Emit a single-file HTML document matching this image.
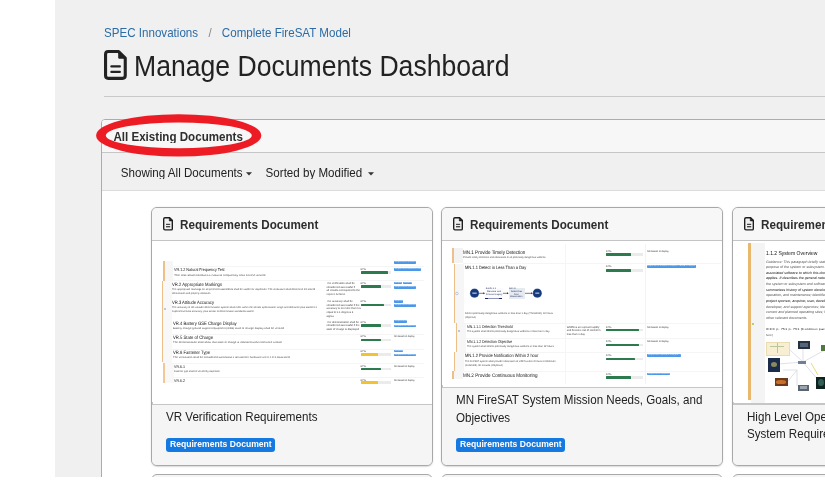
<!DOCTYPE html>
<html><head><meta charset="utf-8">
<style>
*{box-sizing:border-box;margin:0;padding:0}
html,body{width:825px;height:483px;overflow:hidden;background:#fff;font-family:"Liberation Sans",sans-serif;position:relative}
.abs{position:absolute}
.main{position:absolute;left:55px;top:0;width:770px;height:477px;background:#f0f0f0}
.bc{position:absolute;left:104px;top:24.7px;transform:scaleY(1.06);transform-origin:0 2.4px;font-size:11.6px;color:#2c6ca6;white-space:nowrap;line-height:14px}
.bc .sep{color:#888;margin:0 10px 0 10.5px}
.title{position:absolute;left:134px;top:49px;font-size:26.6px;color:#222;white-space:nowrap;line-height:32px;transform:scaleY(1.09);transform-origin:0 7px}
.hr{position:absolute;left:104px;top:96px;width:721px;height:1px;background:#c9c9c9}
.panel{position:absolute;left:101px;top:119px;width:740px;height:380px;border:1.8px solid #acacac;border-radius:4px;background:#fff;overflow:hidden}
.phead{position:absolute;left:0;top:0;right:0;height:32.5px;background:#f7f7f7;border-bottom:1px solid #c6c6c6}
.phead span{position:absolute;left:11.4px;top:9px;transform:scaleY(1.06);transform-origin:0 2.4px;font-size:11.6px;font-weight:bold;color:#2e2e2e;line-height:14px;white-space:nowrap}
.tool{position:absolute;left:0;top:32.5px;right:0;height:38.5px;background:#f0f0f0;border-bottom:1px solid #dcdcdc}
.tool span{position:absolute;top:12.4px;transform:scaleY(1.06);transform-origin:0 2.4px;font-size:11.6px;color:#222;line-height:14px;white-space:nowrap}
.caret{display:inline-block;width:0;height:0;border-left:3px solid transparent;border-right:3px solid transparent;border-top:3px solid #333;vertical-align:middle;margin-left:3px;margin-top:-2px;position:relative;top:2px}
.card{position:absolute;top:207px;width:281.5px;height:258.5px;border:1.8px solid #a8a8a8;border-radius:6px;background:#f5f5f5;overflow:hidden;box-shadow:0 0.5px 1.5px rgba(0,0,0,.15)}
.chead{position:absolute;left:0;top:0;right:0;height:33px;background:#f7f7f7;border-bottom:1.2px solid #c4c4c4}
.chead span{position:absolute;left:28px;top:9.3px;transform:scaleY(1.06);transform-origin:0 2.4px;font-size:11.7px;font-weight:bold;color:#2e2e2e;line-height:14px;white-space:nowrap}
.chead svg{position:absolute;left:11px;top:9px}
.thumb{position:absolute;left:0;top:33px;right:0;background:#fff;border-bottom:3px solid #c6c6c6}
.cfoot{position:absolute;left:0;right:0;bottom:0;background:#f5f5f5}
.ctitle{position:absolute;left:14px;transform:scaleY(1.06);transform-origin:0 4.2px;font-size:11.6px;color:#222;line-height:16.6px}
.badge{position:absolute;left:14px;height:13.9px;background:#1479e0;color:#fff;font-size:8.6px;font-weight:bold;line-height:13.9px;padding:0 3.2px 0 4px;border-radius:3px;white-space:nowrap}
.badge span{display:inline-block;transform:scaleY(1.1);transform-origin:0 60%}
.card2{position:absolute;top:474px;width:281.5px;height:40px;border:1.8px solid #a8a8a8;border-radius:6px;background:#f5f5f5}
.ell{position:absolute;left:0;top:0}
.clip{position:absolute;overflow:hidden}
.blur{filter:blur(0.4px)}
.inner{position:absolute;width:1px;height:1px}
.tt{position:absolute;white-space:nowrap;line-height:1;font-family:"Liberation Sans",sans-serif;text-rendering:geometricPrecision}
.rr{position:absolute}
</style></head><body>
<div class="main"></div>
<div class="bc">SPEC Innovations<span class="sep">/</span>Complete FireSAT Model</div>
<svg class="abs" style="left:104px;top:50px" width="24" height="31" viewBox="0 0 24 31">
<path d="M4.3 1.55 H14.6 L21.25 8.2 V25.6 Q21.25 28.35 18.5 28.35 H4.3 Q1.55 28.35 1.55 25.6 V4.3 Q1.55 1.55 4.3 1.55 Z" fill="none" stroke="#222" stroke-width="3.1" stroke-linejoin="round"/>
<path d="M14.2 1.6 V7.6 Q14.2 8.8 15.4 8.8 H21.3 Z" fill="#222"/>
<line x1="7.4" y1="16.45" x2="15.8" y2="16.45" stroke="#222" stroke-width="2.3" stroke-linecap="round"/>
<line x1="7.4" y1="21.95" x2="15.8" y2="21.95" stroke="#222" stroke-width="2.3" stroke-linecap="round"/>
</svg>
<div class="title">Manage Documents Dashboard</div>
<div class="hr"></div>
<div class="panel">
 <div class="phead"><span>All Existing Documents</span></div>
 <div class="tool"><span style="left:18.8px">Showing All Documents<i class="caret"></i></span><span style="left:163.6px">Sorted by Modified<i class="caret" style="margin-left:6px"></i></span></div>
</div>

<div class="card" style="left:151px">
 <div class="chead"><svg width="11" height="14" viewBox="0 0 11 14"><path d="M2 .7H6.6L9.3 3.4V11.9Q9.3 12.8 8.4 12.8H2Q.7 12.8 .7 11.5V2Q.7.7 2 .7Z" fill="#f0f0f0" stroke="#1e1e1e" stroke-width="1.35"/><path d="M6.3 .8V3.9H9.3Z" fill="#1e1e1e" stroke="#1e1e1e" stroke-width=".6"/><rect x="3" y="6.8" width="4.2" height="1.1" fill="#333"/><rect x="3" y="9.2" width="4.2" height="1.1" fill="#1e1e1e"/></svg><span>Requirements Document</span></div>
 <div class="thumb" style="height:164px"></div>
 <div class="cfoot" style="top:197px"><div class="ctitle" style="top:3.5px">VR Verification Requirements</div><div class="badge" style="top:33px"><span>Requirements Document</span></div></div>
</div>
<div class="card" style="left:441px">
 <div class="chead"><svg width="11" height="14" viewBox="0 0 11 14"><path d="M2 .7H6.6L9.3 3.4V11.9Q9.3 12.8 8.4 12.8H2Q.7 12.8 .7 11.5V2Q.7.7 2 .7Z" fill="#f0f0f0" stroke="#1e1e1e" stroke-width="1.35"/><path d="M6.3 .8V3.9H9.3Z" fill="#1e1e1e" stroke="#1e1e1e" stroke-width=".6"/><rect x="3" y="6.8" width="4.2" height="1.1" fill="#333"/><rect x="3" y="9.2" width="4.2" height="1.1" fill="#1e1e1e"/></svg><span>Requirements Document</span></div>
 <div class="thumb" style="height:147px"></div>
 <div class="cfoot" style="top:180px"><div class="ctitle" style="top:3.5px">MN FireSAT System Mission Needs, Goals, and<br>Objectives</div><div class="badge" style="top:50px"><span>Requirements Document</span></div></div>
</div>
<div class="card" style="left:732px">
 <div class="chead"><svg width="11" height="14" viewBox="0 0 11 14"><path d="M2 .7H6.6L9.3 3.4V11.9Q9.3 12.8 8.4 12.8H2Q.7 12.8 .7 11.5V2Q.7.7 2 .7Z" fill="#f0f0f0" stroke="#1e1e1e" stroke-width="1.35"/><path d="M6.3 .8V3.9H9.3Z" fill="#1e1e1e" stroke="#1e1e1e" stroke-width=".6"/><rect x="3" y="6.8" width="4.2" height="1.1" fill="#333"/><rect x="3" y="9.2" width="4.2" height="1.1" fill="#1e1e1e"/></svg><span>Requirements Document</span></div>
 <div class="thumb" style="height:164px"></div>
 <div class="cfoot" style="top:197px"><div class="ctitle" style="top:3.5px;line-height:16px">High Level Operational Concept and<br>System Requirements</div></div>
</div>
<!--THUMBS-->
<div class="clip blur" style="left:152.5px;top:241px;width:279px;height:163px;background:#fff"><div class="inner" style="left:-152.5px;top:-241px">
<div class="rr" style="left:163px;top:261px;width:10px;height:20px;background:#f6f6f6;"></div>
<div class="rr" style="left:163px;top:281px;width:9px;height:82px;background:#f8f8f8;"></div>
<div class="rr" style="left:165px;top:363px;width:9px;height:20px;background:#f8f8f8;"></div>
<div class="rr" style="left:163.2px;top:261px;width:1.5px;height:20px;background:#eec089;"></div>
<div class="rr" style="left:161.6px;top:281px;width:1.5px;height:81px;background:#eec089;"></div>
<div class="rr" style="left:163.4px;top:363px;width:1.6px;height:20px;background:#f2c898;"></div>
<div class="rr" style="left:172px;top:266px;width:252px;height:0.6px;background:#f5f5f5;"></div>
<div class="rr" style="left:172px;top:279.5px;width:252px;height:0.6px;background:#f5f5f5;"></div>
<div class="rr" style="left:172px;top:334px;width:252px;height:0.6px;background:#f5f5f5;"></div>
<div class="rr" style="left:172px;top:348.5px;width:252px;height:0.6px;background:#f5f5f5;"></div>
<div class="rr" style="left:172px;top:362.5px;width:252px;height:0.6px;background:#f5f5f5;"></div>
<div class="rr" style="left:172px;top:376.5px;width:252px;height:0.6px;background:#f5f5f5;"></div>
<div class="tt" style="left:173.8px;top:268.35px;font-size:4.31px;color:#111;font-weight:normal;font-style:normal;transform:scaleX(0.863);transform-origin:0 0;">VR.1.2 Natural Frequency Test</div>
<div class="tt" style="left:173.8px;top:274.50px;font-size:2.6px;color:#444;font-weight:normal;font-style:normal;transform:scaleX(1.334);transform-origin:0 0;">The test shall conduct a natural frequency test on the article</div>
<div class="tt" style="left:172.4px;top:284.18px;font-size:4.83px;color:#111;font-weight:normal;font-style:normal;transform:scaleX(0.866);transform-origin:0 0;">VR.2 Appropriate Markings</div>
<div class="tt" style="left:172.4px;top:289.20px;font-size:2.6px;color:#444;font-weight:normal;font-style:normal;transform:scaleX(0.995);transform-origin:0 0;">The appropriate markings on all preferred assemblies shall be visible for inspection. The innovative shall determine the stored</div>
<div class="tt" style="left:172.4px;top:292.80px;font-size:2.6px;color:#444;font-weight:normal;font-style:normal;transform:scaleX(0.926);transform-origin:0 0;">identification and property indication</div>
<div class="tt" style="left:172.4px;top:302.18px;font-size:4.83px;color:#111;font-weight:normal;font-style:normal;transform:scaleX(0.855);transform-origin:0 0;">VR.3 Attitude Accuracy</div>
<div class="tt" style="left:172.4px;top:307.20px;font-size:2.6px;color:#444;font-weight:normal;font-style:normal;transform:scaleX(0.990);transform-origin:0 0;">The accuracy of the attitude determination system shall meet within the sensor specification range and tolerance plus stated 0.1</div>
<div class="tt" style="left:172.4px;top:310.50px;font-size:2.6px;color:#444;font-weight:normal;font-style:normal;transform:scaleX(0.980);transform-origin:0 0;">expected vertical accuracy; plus similar to deterministic standards stated</div>
<div class="tt" style="left:172.6px;top:322.88px;font-size:4.83px;color:#111;font-weight:normal;font-style:normal;transform:scaleX(0.868);transform-origin:0 0;">VR.4 Battery GSE Charge Display</div>
<div class="tt" style="left:172.6px;top:327.80px;font-size:2.6px;color:#444;font-weight:normal;font-style:normal;transform:scaleX(1.098);transform-origin:0 0;">Battery charge ground support equipment (GSE) state of charge display shall be verified</div>
<div class="tt" style="left:172.6px;top:337.38px;font-size:4.83px;color:#111;font-weight:normal;font-style:normal;transform:scaleX(0.871);transform-origin:0 0;">VR.5 State of Charge</div>
<div class="tt" style="left:172.6px;top:342.30px;font-size:2.6px;color:#444;font-weight:normal;font-style:normal;transform:scaleX(1.105);transform-origin:0 0;">The demonstration shall show that state of charge is indicated within tolerance at load</div>
<div class="tt" style="left:172.6px;top:351.78px;font-size:4.83px;color:#111;font-weight:normal;font-style:normal;transform:scaleX(0.868);transform-origin:0 0;">VR.6 Fastener Type</div>
<div class="tt" style="left:172.6px;top:356.90px;font-size:2.6px;color:#444;font-weight:normal;font-style:normal;transform:scaleX(1.101);transform-origin:0 0;">The verification shall be considered successful if all fastener hardware are 0.4.3.1 class steel</div>
<div class="tt" style="left:174px;top:364.83px;font-size:4.14px;color:#111;font-weight:normal;font-style:normal;transform:scaleX(0.869);transform-origin:0 0;">VR.6.1</div>
<div class="tt" style="left:174px;top:370.80px;font-size:2.6px;color:#444;font-weight:normal;font-style:normal;transform:scaleX(0.909);transform-origin:0 0;">Fastener type shall be verified by inspection</div>
<div class="tt" style="left:174px;top:378.93px;font-size:4.14px;color:#111;font-weight:normal;font-style:normal;transform:scaleX(0.869);transform-origin:0 0;">VR.6.2</div>
<div class="rr" style="left:163.6px;top:307.6px;width:1.8px;height:1.8px;background:none;border:0.5px solid #8aa8e0;border-radius:50%"></div>
<div class="tt" style="left:326.5px;top:283.05px;font-size:2.7px;color:#3a3a3a;font-weight:normal;font-style:normal;">The verification shall be</div>
<div class="tt" style="left:326.5px;top:286.65px;font-size:2.7px;color:#3a3a3a;font-weight:normal;font-style:normal;">considered successful if</div>
<div class="tt" style="left:326.5px;top:290.25px;font-size:2.7px;color:#3a3a3a;font-weight:normal;font-style:normal;">all circuits correspond to the</div>
<div class="tt" style="left:326.5px;top:293.85px;font-size:2.7px;color:#3a3a3a;font-weight:normal;font-style:normal;">expect. Achieve</div>
<div class="tt" style="left:326.5px;top:301.15px;font-size:2.7px;color:#3a3a3a;font-weight:normal;font-style:normal;">The accuracy shall be</div>
<div class="tt" style="left:326.5px;top:304.75px;font-size:2.7px;color:#3a3a3a;font-weight:normal;font-style:normal;">considered successful if the</div>
<div class="tt" style="left:326.5px;top:308.35px;font-size:2.7px;color:#3a3a3a;font-weight:normal;font-style:normal;">accuracy is no more than 0.5</div>
<div class="tt" style="left:326.5px;top:311.95px;font-size:2.7px;color:#3a3a3a;font-weight:normal;font-style:normal;">equal to 0.1 degrees 3</div>
<div class="tt" style="left:326.5px;top:315.55px;font-size:2.7px;color:#3a3a3a;font-weight:normal;font-style:normal;">sigma</div>
<div class="tt" style="left:326.5px;top:321.75px;font-size:2.7px;color:#3a3a3a;font-weight:normal;font-style:normal;">The demonstration shall be</div>
<div class="tt" style="left:326.5px;top:325.35px;font-size:2.7px;color:#3a3a3a;font-weight:normal;font-style:normal;">considered successful if the</div>
<div class="tt" style="left:326.5px;top:328.95px;font-size:2.7px;color:#3a3a3a;font-weight:normal;font-style:normal;">state of charge is displayed</div>
<div class="tt" style="left:360.6px;top:268.80px;font-size:2.6px;color:#333;font-weight:normal;font-style:normal;">67%</div>
<div class="rr" style="left:360.6px;top:271.40000000000003px;width:30.099999999999966px;height:2.6px;background:#ebebeb;"></div>
<div class="rr" style="left:360.6px;top:271.40000000000003px;width:27.399999999999977px;height:2.6px;background:#2c7a4e;border-radius:0.5px"></div>
<div class="tt" style="left:360.6px;top:282.60px;font-size:2.6px;color:#333;font-weight:normal;font-style:normal;">67%</div>
<div class="rr" style="left:360.6px;top:285.3px;width:30.099999999999966px;height:2.6px;background:#ebebeb;"></div>
<div class="rr" style="left:360.6px;top:285.3px;width:20.399999999999977px;height:2.6px;background:#2c7a4e;border-radius:0.5px"></div>
<div class="tt" style="left:360.6px;top:301.10px;font-size:2.6px;color:#333;font-weight:normal;font-style:normal;">67%</div>
<div class="rr" style="left:360.6px;top:303.90000000000003px;width:30.099999999999966px;height:2.6px;background:#ebebeb;"></div>
<div class="rr" style="left:360.6px;top:303.90000000000003px;width:23.69999999999999px;height:2.6px;background:#2c7a4e;border-radius:0.5px"></div>
<div class="tt" style="left:360.6px;top:321.60px;font-size:2.6px;color:#333;font-weight:normal;font-style:normal;">67%</div>
<div class="rr" style="left:360.6px;top:324.1px;width:30.099999999999966px;height:2.6px;background:#ebebeb;"></div>
<div class="rr" style="left:360.6px;top:324.1px;width:20.399999999999977px;height:2.6px;background:#2c7a4e;border-radius:0.5px"></div>
<div class="tt" style="left:360.6px;top:336.10px;font-size:2.6px;color:#333;font-weight:normal;font-style:normal;">67%</div>
<div class="rr" style="left:360.6px;top:338.6px;width:30.099999999999966px;height:2.6px;background:#ebebeb;"></div>
<div class="rr" style="left:360.6px;top:338.6px;width:20.399999999999977px;height:2.6px;background:#2c7a4e;border-radius:0.5px"></div>
<div class="tt" style="left:360.6px;top:350.60px;font-size:2.6px;color:#333;font-weight:normal;font-style:normal;">67%</div>
<div class="rr" style="left:360.6px;top:353.2px;width:30.099999999999966px;height:2.6px;background:#ebebeb;"></div>
<div class="rr" style="left:360.6px;top:353.2px;width:17.19999999999999px;height:2.6px;background:#f2c230;border-radius:0.5px"></div>
<div class="tt" style="left:360.6px;top:365.60px;font-size:2.6px;color:#333;font-weight:normal;font-style:normal;">67%</div>
<div class="rr" style="left:360.6px;top:367.90000000000003px;width:30.099999999999966px;height:2.6px;background:#ebebeb;"></div>
<div class="rr" style="left:360.6px;top:367.90000000000003px;width:20.399999999999977px;height:2.6px;background:#2c7a4e;border-radius:0.5px"></div>
<div class="tt" style="left:360.6px;top:379.60px;font-size:2.6px;color:#333;font-weight:normal;font-style:normal;">67%</div>
<div class="rr" style="left:360.6px;top:381.2px;width:30.099999999999966px;height:2.6px;background:#ebebeb;"></div>
<div class="rr" style="left:360.6px;top:381.2px;width:17.19999999999999px;height:2.6px;background:#f2c230;border-radius:0.5px"></div>
<div class="rr" style="left:394.1px;top:261.05px;width:21.9px;height:2.5px;background:#4b97ea;border-radius:0.8px"></div>
<div class="tt" style="left:394.70000000000005px;top:261.00px;font-size:2.0px;color:#e8f2ff;font-weight:normal;font-style:normal;transform:scaleX(0.960);transform-origin:0 0;">Requirements Documen</div>
<div class="rr" style="left:394.1px;top:268.05px;width:26.7px;height:2.5px;background:#4b97ea;border-radius:0.8px"></div>
<div class="tt" style="left:394.70000000000005px;top:268.00px;font-size:2.0px;color:#e8f2ff;font-weight:normal;font-style:normal;transform:scaleX(0.948);transform-origin:0 0;">Requirements Document Com</div>
<div class="rr" style="left:394.1px;top:281.95px;width:7.8px;height:2.5px;background:#4b97ea;border-radius:0.8px"></div>
<div class="tt" style="left:394.70000000000005px;top:281.90px;font-size:2.0px;color:#e8f2ff;font-weight:normal;font-style:normal;transform:scaleX(0.942);transform-origin:0 0;">Require</div>
<div class="rr" style="left:402.9px;top:281.95px;width:9.2px;height:2.5px;background:#4b97ea;border-radius:0.8px"></div>
<div class="tt" style="left:403.5px;top:281.90px;font-size:2.0px;color:#e8f2ff;font-weight:normal;font-style:normal;transform:scaleX(0.923);transform-origin:0 0;">Requirem</div>
<div class="rr" style="left:394.1px;top:286.05px;width:21.9px;height:2.5px;background:#4b97ea;border-radius:0.8px"></div>
<div class="tt" style="left:394.70000000000005px;top:286.00px;font-size:2.0px;color:#e8f2ff;font-weight:normal;font-style:normal;transform:scaleX(0.960);transform-origin:0 0;">Requirements Documen</div>
<div class="rr" style="left:394.1px;top:300.05px;width:8.5px;height:2.5px;background:#4b97ea;border-radius:0.8px"></div>
<div class="tt" style="left:394.70000000000005px;top:300.00px;font-size:2.0px;color:#e8f2ff;font-weight:normal;font-style:normal;transform:scaleX(0.842);transform-origin:0 0;">Requirem</div>
<div class="rr" style="left:394.1px;top:304.25px;width:21.7px;height:2.5px;background:#4b97ea;border-radius:0.8px"></div>
<div class="tt" style="left:394.70000000000005px;top:304.20px;font-size:2.0px;color:#e8f2ff;font-weight:normal;font-style:normal;transform:scaleX(0.951);transform-origin:0 0;">Requirements Documen</div>
<div class="rr" style="left:394.1px;top:320.45px;width:13.2px;height:2.5px;background:#4b97ea;border-radius:0.8px"></div>
<div class="tt" style="left:394.70000000000005px;top:320.40px;font-size:2.0px;color:#e8f2ff;font-weight:normal;font-style:normal;transform:scaleX(0.964);transform-origin:0 0;">Requirements</div>
<div class="rr" style="left:394.1px;top:324.75px;width:21.5px;height:2.5px;background:#4b97ea;border-radius:0.8px"></div>
<div class="tt" style="left:394.70000000000005px;top:324.70px;font-size:2.0px;color:#e8f2ff;font-weight:normal;font-style:normal;transform:scaleX(0.941);transform-origin:0 0;">Requirements Documen</div>
<div class="rr" style="left:394.1px;top:349.55px;width:9px;height:2.5px;background:#4b97ea;border-radius:0.8px"></div>
<div class="tt" style="left:394.70000000000005px;top:349.50px;font-size:2.0px;color:#e8f2ff;font-weight:normal;font-style:normal;transform:scaleX(0.900);transform-origin:0 0;">Requirem</div>
<div class="rr" style="left:394.1px;top:353.85px;width:21.5px;height:2.5px;background:#4b97ea;border-radius:0.8px"></div>
<div class="tt" style="left:394.70000000000005px;top:353.80px;font-size:2.0px;color:#e8f2ff;font-weight:normal;font-style:normal;transform:scaleX(0.941);transform-origin:0 0;">Requirements Documen</div>
<div class="tt" style="left:394.4px;top:336.20px;font-size:2.6px;color:#333;font-weight:normal;font-style:normal;transform:scaleX(0.848);transform-origin:0 0;">No dataset to display</div>
<div class="tt" style="left:394.4px;top:365.60px;font-size:2.6px;color:#333;font-weight:normal;font-style:normal;transform:scaleX(0.848);transform-origin:0 0;">No dataset to display</div>
<div class="tt" style="left:394.4px;top:379.80px;font-size:2.6px;color:#333;font-weight:normal;font-style:normal;transform:scaleX(0.848);transform-origin:0 0;">No dataset to display</div>
</div></div>
<div class="clip blur" style="left:442.5px;top:241px;width:279px;height:146px;background:#fff"><div class="inner" style="left:-442.5px;top:-241px">
<div class="rr" style="left:452px;top:248px;width:11px;height:15px;background:#f3f3f3;"></div>
<div class="rr" style="left:454px;top:263.5px;width:10px;height:59px;background:#f6f6f6;"></div>
<div class="rr" style="left:455.6px;top:323px;width:10px;height:29px;background:#f6f6f6;"></div>
<div class="rr" style="left:454px;top:352px;width:10px;height:18.5px;background:#f6f6f6;"></div>
<div class="rr" style="left:452px;top:371px;width:11px;height:8px;background:#f6f6f6;"></div>
<div class="rr" style="left:451.8px;top:248px;width:1.8px;height:15px;background:#eec089;"></div>
<div class="rr" style="left:453.5px;top:263.5px;width:1.8px;height:59.3px;background:#eec089;"></div>
<div class="rr" style="left:455.6px;top:322.8px;width:1.8px;height:29px;background:#eec089;"></div>
<div class="rr" style="left:453.5px;top:352px;width:1.8px;height:18.5px;background:#eec089;"></div>
<div class="rr" style="left:451.8px;top:370.6px;width:1.8px;height:8.5px;background:#eec089;"></div>
<div class="rr" style="left:463px;top:263px;width:258px;height:0.6px;background:#f5f5f5;"></div>
<div class="rr" style="left:463px;top:322.6px;width:258px;height:0.6px;background:#f5f5f5;"></div>
<div class="rr" style="left:463px;top:338px;width:258px;height:0.6px;background:#f5f5f5;"></div>
<div class="rr" style="left:463px;top:352px;width:258px;height:0.6px;background:#f5f5f5;"></div>
<div class="rr" style="left:463px;top:370.5px;width:258px;height:0.6px;background:#f5f5f5;"></div>
<div class="rr" style="left:565px;top:244px;width:0.6px;height:140px;background:#f5f5f5;"></div>
<div class="rr" style="left:645.4px;top:244px;width:0.6px;height:140px;background:#f3f3f3;"></div>
<div class="tt" style="left:463.2px;top:251.12px;font-size:5.17px;color:#111;font-weight:normal;font-style:normal;transform:scaleX(0.881);transform-origin:0 0;">MN.1 Provide Timely Detection</div>
<div class="tt" style="left:463.2px;top:257.20px;font-size:2.6px;color:#444;font-weight:normal;font-style:normal;transform:scaleX(0.944);transform-origin:0 0;">Provide timely detection and notification of all potentially dangerous wildfires</div>
<div class="tt" style="left:464.9px;top:266.30px;font-size:4.6px;color:#111;font-weight:normal;font-style:normal;transform:scaleX(0.874);transform-origin:0 0;">MN.1.1 Detect in Less Than a Day</div>
<svg class="rr" style="left:0;top:0;overflow:visible" width="1" height="1"><g stroke="#222" stroke-width="0.6"><line x1="479" y1="293.3" x2="484" y2="293.3"/><line x1="503" y1="293.3" x2="507.6" y2="293.3"/><line x1="525" y1="293.3" x2="531.5" y2="293.3"/></g><g fill="#222"><path d="M485 293.3 l-1.6 -1 v2z"/><path d="M508.6 293.3 l-1.6 -1 v2z"/><path d="M532.8 293.3 l-1.6 -1 v2z"/></g><circle cx="474.5" cy="293.2" r="4.6" fill="#5b7fc0"/><circle cx="474.5" cy="293.2" r="4.1" fill="#17397a"/><circle cx="537.3" cy="293.2" r="4.6" fill="#5b7fc0"/><circle cx="537.3" cy="293.2" r="4.1" fill="#17397a"/><rect x="472.3" y="292.6" width="4.4" height="1.1" fill="#c8d4ee"/><rect x="535.3" y="292.6" width="4" height="1.1" fill="#c8d4ee"/><circle cx="456.9" cy="293.5" r="1.3" fill="none" stroke="#7a9fe0" stroke-width="0.5"/></svg>
<div class="rr" style="left:484.9px;top:287.8px;width:17.9px;height:11.6px;background:#fbfbfd;"></div>
<div class="rr" style="left:485.2px;top:297.5px;width:17.3px;height:1.9px;background:#1c2660;"></div>
<div class="rr" style="left:488px;top:297.9px;width:11px;height:0.9px;background:#8d93b8;"></div>
<div class="tt" style="left:485.8px;top:288.40px;font-size:2.2px;color:#1e2a5a;font-weight:normal;font-style:normal;">SubFn 1.1</div>
<div class="tt" style="left:486.8px;top:291.20px;font-size:2.2px;color:#1e2a5a;font-weight:normal;font-style:normal;transform:scaleX(1.161);transform-origin:0 0;">Receive and</div>
<div class="tt" style="left:486.2px;top:293.90px;font-size:2.2px;color:#1e2a5a;font-weight:normal;font-style:normal;transform:scaleX(0.988);transform-origin:0 0;">Process Imagery</div>
<div class="rr" style="left:508.6px;top:287.8px;width:16px;height:11.6px;background:#e6eaf1;"></div>
<div class="tt" style="left:509.3px;top:288.40px;font-size:2.2px;color:#1e2a5a;font-weight:normal;font-style:normal;transform:scaleX(0.660);transform-origin:0 0;">SubFn 1.2</div>
<div class="tt" style="left:510.8px;top:291.20px;font-size:2.2px;color:#1e2a5a;font-weight:normal;font-style:normal;transform:scaleX(0.944);transform-origin:0 0;">Detect Fires</div>
<div class="tt" style="left:514px;top:293.50px;font-size:2.2px;color:#1e2a5a;font-weight:normal;font-style:normal;transform:scaleX(1.091);transform-origin:0 0;">from</div>
<div class="tt" style="left:510.3px;top:295.90px;font-size:2.2px;color:#1e2a5a;font-weight:normal;font-style:normal;transform:scaleX(1.054);transform-origin:0 0;">Observation</div>
<div class="rr" style="left:458.3px;top:330.2px;width:1.8px;height:1.8px;background:none;border:0.5px solid #8aa8e0;border-radius:50%"></div>
<div class="tt" style="left:465px;top:313.40px;font-size:2.6px;color:#444;font-weight:normal;font-style:normal;transform:scaleX(0.983);transform-origin:0 0;">Detect potentially dangerous wildfires in less than 1 day (Threshold), 12 hours</div>
<div class="tt" style="left:465px;top:317.30px;font-size:2.6px;color:#444;font-weight:normal;font-style:normal;transform:scaleX(0.875);transform-origin:0 0;">(Objective)</div>
<div class="tt" style="left:467.1px;top:325.23px;font-size:4.14px;color:#111;font-weight:normal;font-style:normal;transform:scaleX(0.834);transform-origin:0 0;">MN.1.1.1 Detection Threshold</div>
<div class="tt" style="left:467.1px;top:331.40px;font-size:2.6px;color:#444;font-weight:normal;font-style:normal;transform:scaleX(0.987);transform-origin:0 0;">The system shall detect potentially dangerous wildfires in less than 1 day</div>
<div class="tt" style="left:467.1px;top:339.53px;font-size:4.14px;color:#111;font-weight:normal;font-style:normal;transform:scaleX(0.843);transform-origin:0 0;">MN.1.1.2 Detection Objective</div>
<div class="tt" style="left:467.1px;top:346.20px;font-size:2.6px;color:#444;font-weight:normal;font-style:normal;transform:scaleX(0.992);transform-origin:0 0;">The system shall detect potentially dangerous wildfires in less than 12 hours</div>
<div class="tt" style="left:464.9px;top:354.30px;font-size:4.6px;color:#111;font-weight:normal;font-style:normal;transform:scaleX(0.874);transform-origin:0 0;">MN.1.2 Provide Notification Within 2 hour</div>
<div class="tt" style="left:464.9px;top:360.90px;font-size:2.6px;color:#444;font-weight:normal;font-style:normal;transform:scaleX(0.972);transform-origin:0 0;">The FireSAT system shall provide notification to USFS within 2 hours of detection</div>
<div class="tt" style="left:464.9px;top:364.90px;font-size:2.6px;color:#444;font-weight:normal;font-style:normal;transform:scaleX(0.955);transform-origin:0 0;">(threshold), 30 minutes (Objective)</div>
<div class="tt" style="left:463.2px;top:374.01px;font-size:5.17px;color:#111;font-weight:normal;font-style:normal;transform:scaleX(0.884);transform-origin:0 0;">MN.2 Provide Continuous Monitoring</div>
<div class="tt" style="left:566.7px;top:326.75px;font-size:2.7px;color:#3a3a3a;font-weight:normal;font-style:normal;">Wildfires are spread rapidly</div>
<div class="tt" style="left:566.7px;top:330.45px;font-size:2.7px;color:#3a3a3a;font-weight:normal;font-style:normal;">and become out of control in</div>
<div class="tt" style="left:566.7px;top:334.15px;font-size:2.7px;color:#3a3a3a;font-weight:normal;font-style:normal;">less than 1 day</div>
<div class="tt" style="left:606px;top:250.50px;font-size:2.6px;color:#333;font-weight:normal;font-style:normal;">67%</div>
<div class="rr" style="left:606px;top:253.20000000000002px;width:36.700000000000045px;height:2.6px;background:#ebebeb;"></div>
<div class="rr" style="left:606px;top:253.20000000000002px;width:25px;height:2.6px;background:#2c7a4e;border-radius:0.5px"></div>
<div class="tt" style="left:606px;top:266.30px;font-size:2.6px;color:#333;font-weight:normal;font-style:normal;">67%</div>
<div class="rr" style="left:606px;top:269.0px;width:36.700000000000045px;height:2.6px;background:#ebebeb;"></div>
<div class="rr" style="left:606px;top:269.0px;width:25px;height:2.6px;background:#2c7a4e;border-radius:0.5px"></div>
<div class="tt" style="left:606px;top:326.60px;font-size:2.6px;color:#333;font-weight:normal;font-style:normal;">67%</div>
<div class="rr" style="left:606px;top:328.8px;width:36.700000000000045px;height:2.6px;background:#ebebeb;"></div>
<div class="rr" style="left:606px;top:328.8px;width:33.299999999999955px;height:2.6px;background:#2c7a4e;border-radius:0.5px"></div>
<div class="tt" style="left:606px;top:340.60px;font-size:2.6px;color:#333;font-weight:normal;font-style:normal;">67%</div>
<div class="rr" style="left:606px;top:343.5px;width:36.700000000000045px;height:2.6px;background:#ebebeb;"></div>
<div class="rr" style="left:606px;top:343.5px;width:33.299999999999955px;height:2.6px;background:#2c7a4e;border-radius:0.5px"></div>
<div class="tt" style="left:606px;top:355.10px;font-size:2.6px;color:#333;font-weight:normal;font-style:normal;">67%</div>
<div class="rr" style="left:606px;top:357.8px;width:36.700000000000045px;height:2.6px;background:#ebebeb;"></div>
<div class="rr" style="left:606px;top:357.8px;width:28.700000000000045px;height:2.6px;background:#2c7a4e;border-radius:0.5px"></div>
<div class="tt" style="left:606px;top:373.60px;font-size:2.6px;color:#333;font-weight:normal;font-style:normal;">67%</div>
<div class="rr" style="left:606px;top:376.1px;width:36.700000000000045px;height:2.6px;background:#ebebeb;"></div>
<div class="rr" style="left:606px;top:376.1px;width:25px;height:2.6px;background:#2c7a4e;border-radius:0.5px"></div>
<div class="tt" style="left:647px;top:251.00px;font-size:2.6px;color:#333;font-weight:normal;font-style:normal;transform:scaleX(0.898);transform-origin:0 0;">No dataset to display</div>
<div class="tt" style="left:647px;top:326.60px;font-size:2.6px;color:#333;font-weight:normal;font-style:normal;transform:scaleX(0.898);transform-origin:0 0;">No dataset to display</div>
<div class="tt" style="left:647px;top:340.60px;font-size:2.6px;color:#333;font-weight:normal;font-style:normal;transform:scaleX(0.898);transform-origin:0 0;">No dataset to display</div>
<div class="rr" style="left:646.8px;top:265.15px;width:49.2px;height:2.5px;background:#4b97ea;border-radius:0.8px"></div>
<div class="tt" style="left:647.4px;top:265.10px;font-size:2.0px;color:#e8f2ff;font-weight:normal;font-style:normal;transform:scaleX(0.988);transform-origin:0 0;">Requirements Document Complete Hardware Compon</div>
<div class="rr" style="left:647px;top:354.25px;width:33.6px;height:2.5px;background:#4b97ea;border-radius:0.8px"></div>
<div class="tt" style="left:647.6px;top:354.20px;font-size:2.0px;color:#e8f2ff;font-weight:normal;font-style:normal;transform:scaleX(0.975);transform-origin:0 0;">Requirements Document Complete H</div>
<div class="rr" style="left:647px;top:372.75px;width:22.5px;height:2.5px;background:#4b97ea;border-radius:0.8px"></div>
<div class="tt" style="left:647.6px;top:372.70px;font-size:2.0px;color:#e8f2ff;font-weight:normal;font-style:normal;transform:scaleX(0.963);transform-origin:0 0;">Requirements Document</div>
</div></div>
<div class="clip blur" style="left:734px;top:241px;width:91px;height:162px;background:#fff"><div class="inner" style="left:-734px;top:-241px">
<div class="rr" style="left:751px;top:243.4px;width:14px;height:160px;background:#f4f4f4;"></div>
<div class="rr" style="left:748.3px;top:243.4px;width:2.7px;height:157px;background:#e8b86c;"></div>
<div class="tt" style="left:766px;top:252.43px;font-size:5.75px;color:#111;font-weight:normal;font-style:normal;transform:scaleX(0.871);transform-origin:0 0;">1.1.2 System Overview</div>
<div class="tt" style="left:766px;top:260.60px;font-size:3.6px;color:#555;font-weight:normal;font-style:italic;">Guidance: This paragraph briefly states the</div>
<div class="tt" style="left:766px;top:266.23px;font-size:3.6px;color:#555;font-weight:normal;font-style:italic;">purpose of the system or subsystem and the</div>
<div class="tt" style="left:766px;top:271.86px;font-size:3.6px;color:#111;font-weight:normal;font-style:italic;">associated software to which this document</div>
<div class="tt" style="left:766px;top:277.49px;font-size:3.6px;color:#111;font-weight:normal;font-style:italic;">applies.  It describes the general nature of</div>
<div class="tt" style="left:766px;top:283.12px;font-size:3.6px;color:#555;font-weight:normal;font-style:italic;">the system or subsystem and software;</div>
<div class="tt" style="left:766px;top:288.75px;font-size:3.6px;color:#111;font-weight:normal;font-style:italic;">summarizes history of system development,</div>
<div class="tt" style="left:766px;top:294.38px;font-size:3.6px;color:#555;font-weight:normal;font-style:italic;">operation, and maintenance; identifies the</div>
<div class="tt" style="left:766px;top:300.01px;font-size:3.6px;color:#111;font-weight:normal;font-style:italic;">project sponsor, acquirer, user, developer,</div>
<div class="tt" style="left:766px;top:305.64px;font-size:3.6px;color:#555;font-weight:normal;font-style:italic;">developer, and support agencies; identifies</div>
<div class="tt" style="left:766px;top:311.27px;font-size:3.6px;color:#555;font-weight:normal;font-style:italic;">current and planned operating sites; lists</div>
<div class="tt" style="left:766px;top:316.90px;font-size:3.6px;color:#555;font-weight:normal;font-style:italic;">other relevant documents</div>
<div class="tt" style="left:766px;top:328.20px;font-size:2.8px;color:#333;font-weight:normal;font-style:normal;transform:scaleX(1.428);transform-origin:0 0;">IEEE p. 751 p. 751 [Continue para]</div>
<div class="tt" style="left:766px;top:333.80px;font-size:2.8px;color:#333;font-weight:normal;font-style:normal;transform:scaleX(1.018);transform-origin:0 0;">here]</div>
<div class="rr" style="left:752.3px;top:323.2px;width:1.6px;height:1.6px;background:#b8c050;border-radius:50%"></div>
<svg class="rr" style="left:0;top:0;overflow:visible" width="1" height="1"><g stroke="#cfd6dd" stroke-width="0.7" fill="none"><line x1="790" y1="350" x2="803" y2="362"/><line x1="803" y1="345" x2="803" y2="362"/><line x1="778" y1="364" x2="803" y2="362"/><line x1="788" y1="381" x2="797" y2="370"/><line x1="797" y1="370" x2="797" y2="386"/><line x1="803" y1="362" x2="825" y2="350"/><line x1="803" y1="362" x2="818" y2="380"/><line x1="783" y1="370" x2="797" y2="370"/></g><line x1="811" y1="363" x2="818" y2="375" stroke="#d8d040" stroke-width="0.7"/></svg>
<div class="rr" style="left:766.3px;top:342.4px;width:23.5px;height:14px;background:#f8eed4;border:0.5px solid #eadcb0"></div>
<div class="rr" style="left:770px;top:346px;width:14px;height:0.5px;background:#b9c79a;"></div>
<div class="rr" style="left:777px;top:343px;width:0.5px;height:10px;background:#b9c79a;"></div>
<div class="rr" style="left:768px;top:358px;width:11.5px;height:13.7px;background:#1b2c4a;"></div>
<div class="rr" style="left:771px;top:362px;width:6px;height:5px;background:#8a8a60;border-radius:50%"></div>
<div class="rr" style="left:774.5px;top:378.3px;width:13.3px;height:7.7px;background:#6b3a1c;"></div>
<div class="rr" style="left:776px;top:380px;width:10px;height:4px;background:#c8702a;border-radius:40%"></div>
<div class="rr" style="left:797.7px;top:340.7px;width:12.3px;height:8.8px;background:#27323f;"></div>
<div class="rr" style="left:799.5px;top:343px;width:8px;height:3.5px;background:#55657a;"></div>
<div class="rr" style="left:798.4px;top:384.6px;width:10.4px;height:6.9px;background:#5b6470;"></div>
<div class="rr" style="left:800px;top:386px;width:7px;height:3px;background:#9aa5b0;"></div>
<div class="rr" style="left:816.3px;top:377px;width:9px;height:12px;background:#10221f;"></div>
<div class="rr" style="left:818px;top:379px;width:6px;height:7px;background:#2f5f55;border-radius:50%"></div>
<div class="rr" style="left:798px;top:361px;width:8px;height:3px;background:#6f7f9a;"></div>
<div class="rr" style="left:821px;top:345px;width:4px;height:6px;background:#4f7a3a;"></div>
</div></div>
<!--/THUMBS-->
<div class="card2" style="left:151px"></div>
<div class="card2" style="left:441px"></div>
<div class="card2" style="left:732px"></div>
<div class="abs" style="left:0;top:477px;width:825px;height:6px;background:#fff"></div>

<svg class="ell" width="825" height="483"><path fill="#ed1c24" fill-rule="evenodd" d="M96.1 135.4 A82.6 21.2 0 1 0 261.3 135.4 A82.6 21.2 0 1 0 96.1 135.4 Z M105.8 135.4 A73 12.8 0 1 0 251.8 135.4 A73 12.8 0 1 0 105.8 135.4 Z"/></svg>
</body></html>
